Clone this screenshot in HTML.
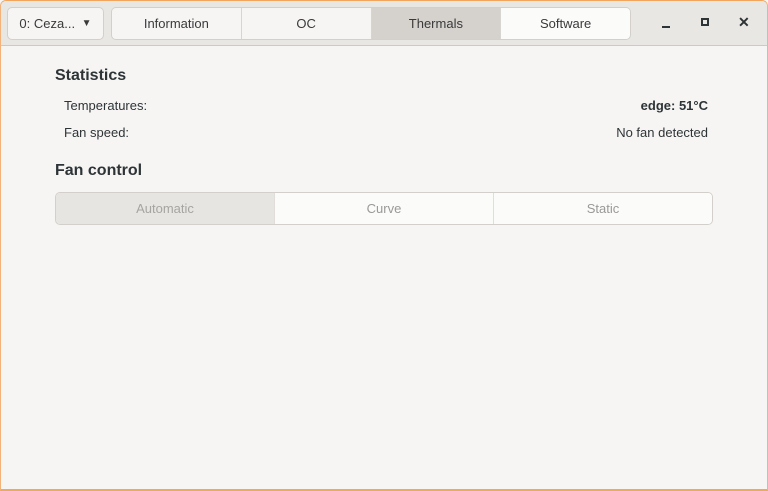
<!DOCTYPE html>
<html><head><style>
*{box-sizing:border-box;margin:0;padding:0}
body{width:768px;height:491px;overflow:hidden;background:#f6f5f4;font-family:"Liberation Sans",sans-serif;color:#2e3436}
.win{position:absolute;left:0;top:0;width:768px;height:491px;border:1px solid #f2b27a;border-top:1px solid #f2a55c;border-bottom:2px solid #f0a860;border-radius:6px 6px 0 0;background:#f6f5f4;overflow:hidden}
.hdr{position:absolute;left:0;top:0;right:0;height:45px;background:#e9e7e4;border-bottom:1px solid #cdc9c5}
.btn{position:absolute;top:6px;height:33px;background:#f6f5f4;border:1px solid #d3cfcb;border-radius:5px;font-size:13px;color:#3a3a3a;display:flex;align-items:center;justify-content:center}
.tabs{position:absolute;left:110px;top:6px;width:520px;height:33px;border:1px solid #d3cfcb;border-radius:5px;display:flex;overflow:hidden}
.tabs div{flex:1;display:flex;align-items:center;justify-content:center;font-size:13px;color:#3a3a3a;background:#f6f5f4;border-right:1px solid #d8d4d0}
.tabs div:last-child{border-right:none;background:#fbfbfa}
.tabs .sel{background:#d5d1cc}
.wc{position:absolute;top:14px;font-size:13px;font-weight:bold;color:#2e3436}
h2{position:absolute;left:54px;font-size:16px;font-weight:bold;color:#2e3436}
.row{position:absolute;left:63px;right:59px;font-size:13px;color:#2e3436;display:flex;justify-content:space-between}
.seg{position:absolute;left:54px;top:191px;width:658px;height:33px;border:1px solid #d3cfcb;border-radius:5px;display:flex;overflow:hidden}
.seg div{flex:1;display:flex;align-items:center;justify-content:center;font-size:13px;color:#9a9996;background:#fbfbfa;border-right:1px solid #e0ddda}
.seg div:last-child{border-right:none}
.seg .sel{background:#e6e5e1;color:#a6a5a2}
</style></head><body><div class="win">
<div class="hdr">
<div class="btn" style="left:6px;width:97px">0: Ceza...&nbsp;<span style="font-size:10px;margin-left:3px">▼</span></div>
<div class="tabs"><div>Information</div><div>OC</div><div class="sel">Thermals</div><div>Software</div></div>
<div style="position:absolute;left:661px;top:25px;width:8px;height:2px;background:#2e3436"></div>
<div style="position:absolute;left:700px;top:17px;width:8px;height:8px;border:2px solid #2e3436"></div>
<div class="wc" style="left:737px;top:13px;font-size:14px">✕</div>
</div>
<h2 style="top:66px">Statistics</h2>
<div class="row" style="top:97px"><span>Temperatures:</span><span style="font-weight:bold">edge: 51°C</span></div>
<div class="row" style="top:124px"><span>Fan speed:</span><span>No fan detected</span></div>
<h2 style="top:161px">Fan control</h2>
<div class="seg"><div class="sel">Automatic</div><div>Curve</div><div>Static</div></div>
</div></body></html>
